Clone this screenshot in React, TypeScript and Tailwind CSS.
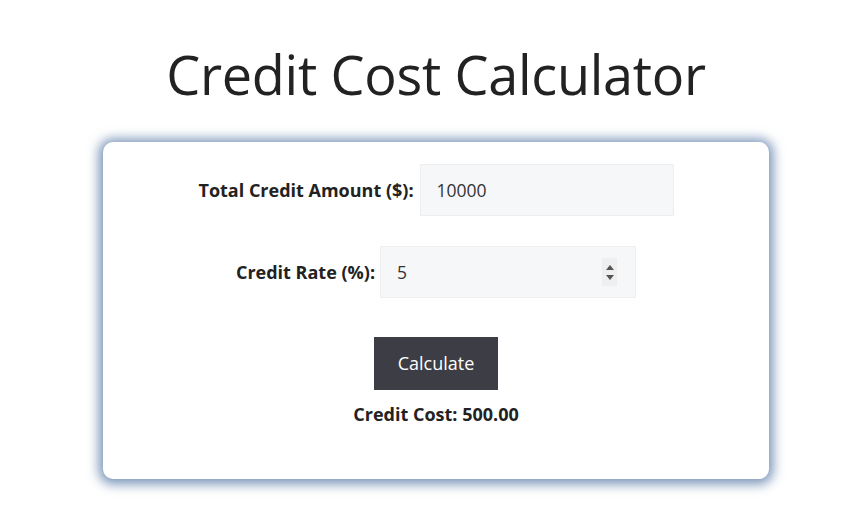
import { useState } from "react";

export default function App() {
  const [amount, setAmount] = useState("10000");
  const [rate, setRate] = useState("5");
  const [cost, setCost] = useState("500.00");

  const calculate = () => {
    const a = parseFloat(amount) || 0;
    const r = parseFloat(rate) || 0;
    setCost(((a * r) / 100).toFixed(2));
  };

  return (
    <div className="min-h-[527px] bg-white flex flex-col items-center pl-[7px] text-[#222] font-['Open_Sans',sans-serif]">
      <h1 className="mt-[38px] text-[54px] leading-[72px] font-normal tracking-[-0.3px] text-[#222]">
        Credit Cost Calculator
      </h1>

      <div className="mt-[32px] w-[666px] h-[337px] bg-white rounded-[10px] shadow-[0_1px_12px_4px_rgba(85,120,165,0.8)] flex flex-col items-center pt-[22px]">
        <div className="flex items-center gap-[6px]">
          <label className="text-[18px] font-bold text-[#222]">Total Credit Amount ($):</label>
          <input
            value={amount}
            onChange={e => setAmount(e.target.value)}
            className="w-[254px] h-[52px] px-[16px] bg-[#f6f7f9] border border-[#eceef0] text-[17.5px] text-[#333] outline-none"
          />
        </div>

        <div className="mt-[30px] flex items-center gap-[5px]">
          <label className="text-[18px] font-bold text-[#222]">Credit Rate (%):</label>
          <div className="relative w-[256px] h-[52px] bg-[#f6f7f9] border border-[#eceef0]">
            <input
              value={rate}
              onChange={e => setRate(e.target.value)}
              className="w-full h-full px-[16px] bg-transparent text-[17.5px] text-[#333] outline-none"
            />
            <div className="absolute right-[18px] top-[11px] w-[15px] h-[28px] bg-[#efefef] flex flex-col items-center justify-center gap-[5px]">
              <svg width="8" height="5" viewBox="0 0 8 5">
                <path d="M0 5 L4 0 L8 5 Z" fill="#555" />
              </svg>
              <svg width="8" height="5" viewBox="0 0 8 5">
                <path d="M0 0 L4 5 L8 0 Z" fill="#555" />
              </svg>
            </div>
          </div>
        </div>

        <button
          onClick={calculate}
          className="mt-[39px] w-[124px] h-[53px] bg-[#3d3d45] text-white text-[18px]"
        >
          Calculate
        </button>

        <p className="mt-[11px] text-[18px] font-bold text-[#222]">Credit Cost: {cost}</p>
      </div>
    </div>
  );
}
